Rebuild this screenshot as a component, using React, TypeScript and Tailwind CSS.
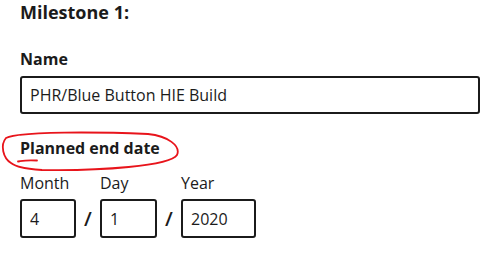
import React from 'react';

const font = { fontFamily: '"Open Sans", "Noto Sans", Arial, sans-serif' };

function DateField({ label, value, width }: { label: string; value: string; width: string }) {
  return (
    <div className="flex flex-col">
      <label className="text-[16px] leading-6 text-[#1b1b1b]">{label}</label>
      <input
        readOnly
        value={value}
        className={`mt-1 h-[39px] ${width} rounded-[3px] border-2 border-[#1b1b1b] bg-white px-2 text-[16px] text-[#1b1b1b] outline-none`}
      />
    </div>
  );
}

export default function App() {
  return (
    <div className="relative h-[260px] w-[495px] bg-white pl-5" style={font}>
      <h2 className="text-[18px] font-bold leading-6 text-[#1b1b1b]">Milestone 1:</h2>

      <label className="mt-[23px] block text-[16px] font-bold leading-6 text-[#1b1b1b]">Name</label>
      <input
        readOnly
        value="PHR/Blue Button HIE Build"
        className="mt-[5px] block h-[38px] w-[460px] rounded-[3px] border-2 border-[#1b1b1b] bg-white px-2 text-[16px] text-[#1b1b1b] outline-none"
      />

      <div className="mt-[22px] text-[16px] font-bold leading-6 text-[#1b1b1b]">Planned end date</div>
      <div className="mt-[11px] flex items-end">
        <DateField label="Month" value="4" width="w-[56px]" />
        <span className="flex h-[39px] w-[24px] items-center justify-center text-[20px] font-semibold text-[#1b1b1b]">/</span>
        <DateField label="Day" value="1" width="w-[57px]" />
        <span className="flex h-[39px] w-[24px] items-center justify-center text-[20px] font-semibold text-[#1b1b1b]">/</span>
        <DateField label="Year" value="2020" width="w-[75px]" />
      </div>

      {/* red annotation circle */}
      <svg className="pointer-events-none absolute left-0 top-0" width="495" height="260" fill="none">
        <path d="M37 160.5 C30 160, 23 160.5, 18 161.5" stroke="#e8141b" strokeWidth="1.8" strokeLinecap="round" />
        <path
          d="M11 163 C3 158, 0 145, 6 138 C20 131, 100 132, 148 134 C168 136, 181 146, 177 155 C170 166, 100 171, 42 170 C26 169, 16 167, 11 163"
          stroke="#e8141b"
          strokeWidth="1.8"
          strokeLinecap="round"
        />
      </svg>
    </div>
  );
}
